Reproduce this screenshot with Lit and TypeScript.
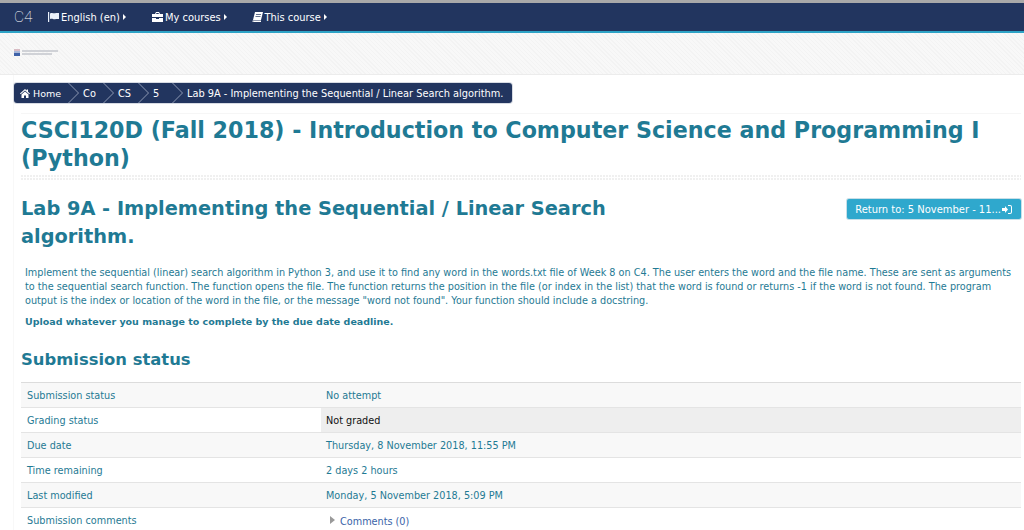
import { LitElement, html, css } from "lit";
import { customElement } from "lit/decorators.js";

const rows = [
  { label: "Submission status", value: "No attempt" },
  { label: "Grading status", value: "Not graded", graded: true },
  { label: "Due date", value: "Thursday, 8 November 2018, 11:55 PM" },
  { label: "Time remaining", value: "2 days 2 hours" },
  { label: "Last modified", value: "Monday, 5 November 2018, 5:09 PM" },
];

const crumbs = [
  { text: "Co" },
  { text: "CS" },
  { text: "5", wide: true },
  { text: "Lab 9A - Implementing the Sequential / Linear Search algorithm." },
];

@customElement("app-root")
export class AppRoot extends LitElement {
  static styles = css`
    :host {
      display: block;
      height: 530px;
      overflow: hidden;
      background: #fff;
      font-family: "DejaVu Sans", Verdana, sans-serif;
      font-size: 10px;
      color: #1f7a94;
    }
    .topbar {
      height: 28px;
      margin-top: 3px;
      background: #22355f;
      border-bottom: 2px solid #2ea3c6;
      box-shadow: 0 -3px 0 #a9a9a9, 0 1px 2px rgba(0, 0, 0, 0.35);
      display: flex;
      align-items: center;
      color: #fff;
      padding-left: 14px;
    }
    .brand {
      font-family: Roboto, sans-serif;
      font-size: 15.5px;
      font-weight: 100;
      color: #fff;
      width: 34px;
    }
    .menu {
      display: flex;
      align-items: center;
      gap: 2px;
      font-size: 9.9px;
      white-space: nowrap;
    }
    .menu svg {
      flex: none;
    }
    .menu.lang {
      width: 104px;
    }
    .menu.courses {
      width: 99.500px;
    }
    .caret {
      width: 0;
      height: 0;
      margin-left: 1px;
      border-left: 3px solid #fff;
      border-top: 3px solid transparent;
      border-bottom: 3px solid transparent;
    }
    .band {
      height: 42px;
      background: repeating-linear-gradient(45deg, #f3f3f3 0 1px, #f8f8f8 1px 3px);
      border-bottom: 1px solid #ececec;
      display: flex;
      align-items: center;
      padding: 0 0 3px 14px;
      box-sizing: border-box;
      gap: 2px;
    }
    .logo-text {
      display: flex;
      flex-direction: column;
      gap: 1px;
    }
    .logo-text i {
      display: block;
      height: 2px;
      background: #d0d2d7;
    }
    .content {
      margin-left: 13px;
      padding: 8px 3px 0 0;
      border-left: 1px solid #f8f8f8;
      height: 455px;
    }
    .crumbs {
      display: inline-flex;
      align-items: center;
      height: 20px;
      background: #22355f;
      border-radius: 3px;
      color: #fff;
      font-size: 9.8px;
      padding: 0 9px 0 6px;
      box-shadow: 0 0 0 1px #d7dbe3;
      white-space: nowrap;
    }
    .crumb {
      display: flex;
      align-items: center;
      gap: 3px;
      font-size: 9.5px;
    }
    .sep {
      flex: none;
      margin: 0 4px 0 7px;
    }
    .wide {
      width: 12px;
    }
    h1 {
      margin: 10px 0 0 7px;
      padding-top: 2px;
      border-top: 1px solid #f6f6f6;
      font-size: 22.2px;
      line-height: 28px;
      font-weight: 700;
      color: #1f7a94;
    }
    .dots {
      height: 7px;
      margin: 2px 0 0 7px;
      background-image: linear-gradient(#fff 1px, transparent 1px),
        linear-gradient(90deg, #f0f0f0 2px, transparent 2px);
      background-size: 3px 3px;
    }
    .head {
      display: flex;
      justify-content: space-between;
      align-items: flex-start;
      margin: 14px 0 0 7px;
    }
    h2 {
      margin: 0;
      width: 640px;
      font-size: 19.350px;
      line-height: 28px;
      font-weight: 700;
      color: #1f7a94;
    }
    .return {
      display: flex;
      align-items: center;
      gap: 1px;
      height: 20px;
      margin-top: 4px;
      padding: 0 9px 0 8px;
      background: #2fa8cd;
      border-radius: 2px;
      box-shadow: 0 0 0 1px #c8dfe8;
      color: #fff;
      font-size: 9.950px;
      white-space: nowrap;
    }
    .intro {
      margin: 15px 8px 0 11px;
      line-height: 14px;
      font-size: 9.7px;
      color: #1f7a94;
    }
    .intro p {
      margin: 0;
    }
    .intro b {
      display: block;
      margin-top: 7px;
      font-size: 9.5px;
    }
    h3 {
      margin: 20px 0 0 7px;
      font-size: 16.4px;
      line-height: 22px;
      font-weight: 700;
      color: #1f7a94;
    }
    .table {
      margin: 11px 0 0 7px;
      border-top: 1px solid #dcdcdc;
      font-size: 9.7px;
    }
    .row {
      display: grid;
      grid-template-columns: 300px 1fr;
      height: 24px;
      border-bottom: 1px solid #e4e4e4;
      align-items: center;
    }
    .row:nth-child(odd) {
      background: #f8f8f8;
    }
    .row > div {
      padding-left: 6px;
      height: 100%;
      display: flex;
      align-items: center;
    }
    .row > div + div {
      padding-left: 5px;
    }
    .graded {
      background: #eeeeee;
      color: #111;
    }
    .toggle {
      width: 0;
      height: 0;
      margin: 0 5px 0 4px;
      border-left: 5px solid #9a9a9a;
      border-top: 4px solid transparent;
      border-bottom: 4px solid transparent;
    }
    .comments {
      color: #3a63a8;
      padding-top: 2px;
    }
  `;

  render() {
    return html`
      <div class="topbar">
        <span class="brand">C4</span>
        <span class="menu lang">
          <svg width="11" height="10" viewBox="0 0 11 10">
            <path d="M0 0h1.200v10H0zM2 1.500c3-1.500 3 .5 6-.5h3v6H8C5 8 5 6 2 7z" fill="#eaf1fb" />
          </svg>
          English (en)<span class="caret"></span>
        </span>
        <span class="menu courses">
          <svg width="11" height="10" viewBox="0 0 11 10">
            <path d="M4 0h3l1 2h3v3H0V2h3zM4.500 1 4 2h3l-.5-1zM0 6h4v1h3V6h4v4H0z" fill="#fff" />
          </svg>
          My courses<span class="caret"></span>
        </span>
        <span class="menu">
          <svg width="11" height="10" viewBox="0 0 11 10">
            <path d="M3 0h8L9 8H1zM1 8.500h8V10H2C0 10 0 8.500 1 8.500z" fill="#fff" />
            <path d="M4 2.500h5M3.500 4.500h5" stroke="#22355f" stroke-width="0.7" />
          </svg>
          This course<span class="caret"></span>
        </span>
      </div>
      <div class="band">
        <svg width="6" height="7" viewBox="0 0 6 7">
          <rect width="6" height="2" fill="#d8bcc4" />
          <rect y="2" width="6" height="2" fill="#a9b8d8" />
          <rect y="4" width="6" height="3" fill="#3f62a8" />
        </svg>
        <span class="logo-text">
          <i style="width:36px"></i>
          <i style="width:30px"></i>
        </span>
      </div>
      <div class="content">
        <div class="crumbs">
          <span class="crumb">
            <svg width="10" height="9" viewBox="0 0 10 9">
              <path d="M5 0l1.700 1.500V.5h1.300v2.200L10 4.500l-.7.700L5 1.400.7 5.200 0 4.500zM1.500 5.500 5 2.400l3.500 3.100V9H6V6.500H4V9H1.500z" fill="#fff" />
            </svg>
            Home
          </span>
          ${crumbs.map(
            (c) => html`
              <svg class="sep" width="11" height="20" viewBox="0 0 11 20">
                <path d="M.5 0l10 10-10 10" fill="none" stroke="#a9b3c8" stroke-width="0.8" />
              </svg>
              <span class=${c.wide ? "wide" : ""}>${c.text}</span>
            `
          )}
        </div>
        <h1>CSCI120D (Fall 2018) - Introduction to Computer Science and Programming I (Python)</h1>
        <div class="dots"></div>
        <div class="head">
          <h2>Lab 9A - Implementing the Sequential / Linear Search algorithm.</h2>
          <span class="return">
            Return to: 5 November - 11...
            <svg width="10" height="9" viewBox="0 0 10 9">
              <path d="M0 3h3V1l3 3.500L3 8V6H0zM6 0h2a2 2 0 0 1 2 2v5a2 2 0 0 1-2 2H6V8h2a1 1 0 0 0 1-1V2a1 1 0 0 0-1-1H6z" fill="#fff" />
            </svg>
          </span>
        </div>
        <div class="intro">
          <p>
            Implement the sequential (linear) search algorithm in Python 3, and use it to find any word in the
            words.txt file of Week 8 on C4. The user enters the word and the file name. These are sent as arguments
            to the sequential search function. The function opens the file. The function returns the position in the
            file (or index in the list) that the word is found or returns -1 if the word is not found. The program
            output is the index or location of the word in the file, or the message "word not found". Your function
            should include a docstring.
          </p>
          <b>Upload whatever you manage to complete by the due date deadline.</b>
        </div>
        <h3>Submission status</h3>
        <div class="table">
          ${rows.map(
            (r) => html`
              <div class="row">
                <div>${r.label}</div>
                <div class=${r.graded ? "graded" : ""}>${r.value}</div>
              </div>
            `
          )}
          <div class="row">
            <div>Submission comments</div>
            <div><span class="toggle"></span><span class="comments">Comments (0)</span></div>
          </div>
        </div>
      </div>
    `;
  }
}
